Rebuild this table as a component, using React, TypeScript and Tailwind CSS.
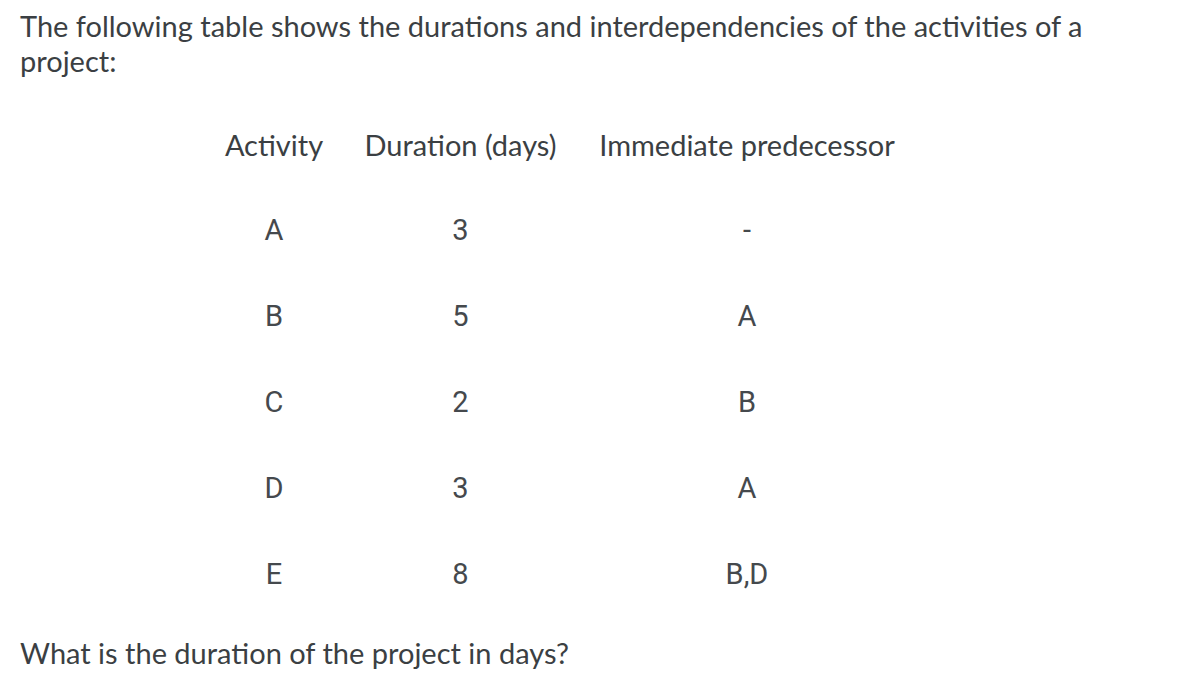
const rows = [
  ["A", "3", "-"],
  ["B", "5", "A"],
  ["C", "2", "B"],
  ["D", "3", "A"],
  ["E", "8", "B,D"],
];

export default function App() {
  return (
    <main className="min-h-screen bg-white px-[20px] pt-[8px] text-[#3b3f43] font-['Lato',sans-serif]">
      <p className="max-w-[1100px] text-[29px] leading-[35px]">
        The following table shows the durations and interdependencies of the activities of a project:
      </p>

      <div className="ml-[184px] mt-[24px] grid grid-cols-[140px_233px_340px]">
        <div className="flex h-[86px] items-center justify-center text-[29px]">Activity</div>
        <div className="flex h-[86px] items-center justify-center text-[29px]">Duration (days)</div>
        <div className="flex h-[86px] items-center justify-center text-[29px]">Immediate predecessor</div>
        {rows.map((row, i) =>
          row.map((cell, j) => (
            <div
              key={`${i}-${j}`}
              className="flex h-[86px] items-center justify-center font-['Roboto',sans-serif] text-[29px] text-[#45494d]"
            >
              {cell}
            </div>
          ))
        )}
      </div>

      <p className="mt-[17px] text-[29px] leading-[35px]">What is the duration of the project in days?</p>
    </main>
  );
}
